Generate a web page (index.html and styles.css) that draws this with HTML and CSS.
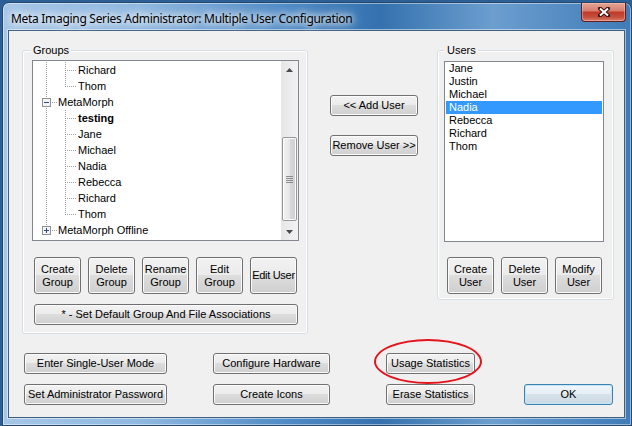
FILE: index.html
```html
<!DOCTYPE html>
<html lang="en">
<head>
    <meta charset="UTF-8">
    <title>Multiple User Configuration</title>
    <link rel="stylesheet" href="styles.css">
</head>
<body>
    <div class="window">
        <div class="titlebar">
            <span class="title">Meta Imaging Series Administrator: Multiple User Configuration</span>
            <span class="close">
                <svg width="12" height="10" viewBox="0 0 12 10">
                    <path d="M2 1.5 L10 8.5 M10 1.5 L2 8.5" stroke="#3b1212" stroke-width="4" stroke-linecap="square"/>
                    <path d="M2 1.5 L10 8.5 M10 1.5 L2 8.5" stroke="#fff" stroke-width="2"/>
                </svg>
            </span>
        </div>
        <div class="client">
            <div class="top">
                <div class="group groups">
                    <span class="legend">Groups</span>
                    <div class="tree">
                        <div class="tree-list">
                            <div class="row child">Richard</div>
                            <div class="row child last">Thom</div>
                            <div class="row root">
                                <svg class="exp" width="9" height="9" viewBox="0 0 9 9">
                                    <rect x="0.5" y="0.5" width="8" height="8" fill="#f4f4f4" stroke="#919191"/>
                                    <path d="M2 4.5 H7" stroke="#2a4d8c"/>
                                </svg>MetaMorph
                            </div>
                            <div class="row child"><b>testing</b></div>
                            <div class="row child">Jane</div>
                            <div class="row child">Michael</div>
                            <div class="row child">Nadia</div>
                            <div class="row child">Rebecca</div>
                            <div class="row child">Richard</div>
                            <div class="row child last">Thom</div>
                            <div class="row root end">
                                <svg class="exp" width="9" height="9" viewBox="0 0 9 9">
                                    <rect x="0.5" y="0.5" width="8" height="8" fill="#f4f4f4" stroke="#919191"/>
                                    <path d="M2 4.5 H7 M4.5 2 V7" stroke="#2a4d8c"/>
                                </svg>MetaMorph Offline
                            </div>
                        </div>
                        <div class="scrollbar">
                            <div class="arrow">
                                <svg width="7" height="4" viewBox="0 0 7 4"><path d="M0 4 L3.5 0 L7 4 Z" fill="#4a4a4a"/></svg>
                            </div>
                            <div class="track">
                                <div class="thumb">
                                    <svg width="7" height="7" viewBox="0 0 7 7"><path d="M0 0.5 H7 M0 2.5 H7 M0 4.5 H7 M0 6.5 H7" stroke="#8a8a8a"/></svg>
                                </div>
                            </div>
                            <div class="arrow">
                                <svg width="7" height="4" viewBox="0 0 7 4"><path d="M0 0 L7 0 L3.5 4 Z" fill="#4a4a4a"/></svg>
                            </div>
                        </div>
                    </div>
                    <div class="btn-row">
                        <button class="btn tall">Create<br>Group</button>
                        <button class="btn tall">Delete<br>Group</button>
                        <button class="btn tall">Rename<br>Group</button>
                        <button class="btn tall">Edit<br>Group</button>
                        <button class="btn tall oneline">Edit User</button>
                    </div>
                    <button class="btn defaults">* - Set Default Group And File Associations</button>
                </div>

                <div class="middle">
                    <button class="btn move">&lt;&lt; Add User</button>
                    <button class="btn move">Remove User &gt;&gt;</button>
                </div>

                <div class="group users">
                    <span class="legend">Users</span>
                    <div class="listbox">
                        <div class="item">Jane</div>
                        <div class="item">Justin</div>
                        <div class="item">Michael</div>
                        <div class="item selected">Nadia</div>
                        <div class="item">Rebecca</div>
                        <div class="item">Richard</div>
                        <div class="item">Thom</div>
                    </div>
                    <div class="btn-row">
                        <button class="btn tall">Create<br>User</button>
                        <button class="btn tall">Delete<br>User</button>
                        <button class="btn tall">Modify<br>User</button>
                    </div>
                </div>
            </div>

            <div class="bottom">
                <div class="col col1">
                    <button class="btn">Enter Single-User Mode</button>
                    <button class="btn">Set Administrator Password</button>
                </div>
                <div class="col col2">
                    <button class="btn">Configure Hardware</button>
                    <button class="btn">Create Icons</button>
                </div>
                <div class="col col3">
                    <div class="marked">
                        <button class="btn">Usage Statistics</button>
                        <span class="ring"></span>
                    </div>
                    <button class="btn">Erase Statistics</button>
                </div>
                <div class="col col4">
                    <button class="btn ok">OK</button>
                </div>
            </div>
        </div>
    </div>
</body>
</html>
```

FILE: styles.css
```css
body {
    margin: 0;
    width: 632px;
    height: 426px;
    overflow: hidden;
    background: #2b5f96;
    font-family: "Liberation Sans", Arial, sans-serif;
    font-size: 11px;
    color: #000;
}
.window {
    box-sizing: border-box;
    width: 630px;
    height: 424px;
    margin: 2px 0 0 2px;
    border: 1px solid #27476b;
    border-radius: 7px 7px 0 0;
    background: linear-gradient(to right, #a6c6e7 0%, #8fb8e0 22%, #4f8bc6 45%, #3471ae 60%, #6c9ecf 78%, #3f7bb8 100%);
    box-shadow: inset 0 0 0 1px rgba(255, 255, 255, 0.45);
}
.titlebar {
    height: 27px;
    display: flex;
    justify-content: space-between;
    align-items: flex-start;
}
.title {
    padding: 7px 0 0 8px;
    font-family: "Noto Sans", "Liberation Sans", sans-serif;
    font-size: 12px;
    letter-spacing: -0.3px;
    color: #000;
    text-shadow: 0 0 6px #fff, 0 0 10px #fff, 0 0 14px #fff;
}
.close {
    width: 45px;
    height: 19px;
    margin-right: 5px;
    box-sizing: border-box;
    border: 1px solid #5e2020;
    border-top: none;
    border-radius: 0 0 4px 4px;
    background: linear-gradient(#e4a696 0%, #d88070 42%, #c03a28 52%, #c4523f 80%, #d8826f 100%);
    box-shadow: inset 0 0 0 1px rgba(255, 200, 190, 0.45);
    display: flex;
    align-items: center;
    justify-content: center;
}
.client {
    box-sizing: border-box;
    width: 617px;
    height: 388px;
    margin-left: 5px;
    background: #f0f0f0;
    border: 1px solid #3d5f82;
    box-shadow: 0 0 0 1px rgba(255, 255, 255, 0.5);
}
.top {
    display: flex;
    align-items: flex-start;
    padding: 19px 0 0 13px;
}
.group {
    position: relative;
    box-sizing: border-box;
    border: 1px solid #d5dfe5;
    border-radius: 3px;
    box-shadow: inset 0 0 0 1px #fff;
}
.legend {
    position: absolute;
    top: -7px;
    padding: 0 2px;
    line-height: 13px;
    background: #f0f0f0;
}
.groups {
    width: 286px;
    padding: 9px 8px 8px 9px;
}
.groups .legend {
    left: 8px;
}
.tree {
    box-sizing: border-box;
    height: 181px;
    border: 1px solid #828790;
    background: #fff;
    display: flex;
}
.tree-list {
    flex: 1;
    padding-top: 1px;
}
.row {
    height: 16px;
    line-height: 16px;
    white-space: nowrap;
    background: repeating-linear-gradient(#a0a0a0 0 1px, transparent 1px 2px) 13px 0 / 1px 16px no-repeat;
}
.row.child {
    padding-left: 45px;
    background:
        repeating-linear-gradient(#a0a0a0 0 1px, transparent 1px 2px) 13px 0 / 1px 16px no-repeat,
        repeating-linear-gradient(#a0a0a0 0 1px, transparent 1px 2px) 32px 0 / 1px 16px no-repeat,
        repeating-linear-gradient(to right, #a0a0a0 0 1px, transparent 1px 2px) 34px 8px / 9px 1px no-repeat;
}
.row.child.last {
    background:
        repeating-linear-gradient(#a0a0a0 0 1px, transparent 1px 2px) 13px 0 / 1px 16px no-repeat,
        repeating-linear-gradient(#a0a0a0 0 1px, transparent 1px 2px) 32px 0 / 1px 9px no-repeat,
        repeating-linear-gradient(to right, #a0a0a0 0 1px, transparent 1px 2px) 34px 8px / 9px 1px no-repeat;
}
.row.root {
    padding-left: 9px;
    display: flex;
    align-items: center;
    background:
        repeating-linear-gradient(#a0a0a0 0 1px, transparent 1px 2px) 13px 0 / 1px 16px no-repeat,
        repeating-linear-gradient(to right, #a0a0a0 0 1px, transparent 1px 2px) 19px 8px / 5px 1px no-repeat;
}
.row.root.end {
    background:
        repeating-linear-gradient(#a0a0a0 0 1px, transparent 1px 2px) 13px 0 / 1px 8px no-repeat,
        repeating-linear-gradient(to right, #a0a0a0 0 1px, transparent 1px 2px) 19px 8px / 5px 1px no-repeat;
}
.exp {
    margin-right: 7px;
    flex: none;
}
.scrollbar {
    width: 17px;
    display: flex;
    flex-direction: column;
    background: linear-gradient(to right, #e6e6e6, #f2f2f2);
}
.arrow {
    height: 17px;
    display: flex;
    align-items: center;
    justify-content: center;
}
.track {
    flex: 1;
    padding-top: 59px;
}
.thumb {
    box-sizing: border-box;
    height: 84px;
    margin: 0 1px;
    border: 1px solid #979797;
    border-radius: 2px;
    background: linear-gradient(to right, #f4f4f4, #e6e6e6 50%, #d8d8d8 51%, #d0d0d0);
    box-shadow: inset 0 0 0 1px #fbfbfb;
    display: flex;
    align-items: center;
    justify-content: center;
}
.btn {
    box-sizing: border-box;
    height: 21px;
    padding: 0;
    font-family: "Liberation Sans", Arial, sans-serif;
    font-size: 11px;
    line-height: 13px;
    color: #000;
    white-space: nowrap;
    border: 1px solid #707070;
    border-radius: 3px;
    background: linear-gradient(#f2f2f2 0%, #ebebeb 48%, #dddddd 50%, #cfcfcf 100%);
    box-shadow: inset 0 0 0 1px #fbfbfb;
}
.btn-row {
    display: flex;
    gap: 7px;
    margin-top: 16px;
    padding-left: 2px;
}
.btn.tall {
    width: 47px;
    height: 37px;
}
.btn.oneline {
    letter-spacing: -0.3px;
}
.defaults {
    display: block;
    width: 264px;
    margin: 10px 0 0 2px;
}
.middle {
    display: flex;
    flex-direction: column;
    gap: 19px;
    width: 88px;
    margin-left: 22px;
    padding-top: 45px;
}
.btn.move {
    width: 88px;
}
.users {
    width: 177px;
    height: 250px;
    margin-left: 19px;
    padding: 10px 0 0 6px;
}
.users .legend {
    left: 7px;
}
.listbox {
    box-sizing: border-box;
    width: 160px;
    height: 181px;
    border: 1px solid #828790;
    background: #fff;
    padding: 0 1px;
}
.item {
    height: 13px;
    line-height: 13px;
    padding-left: 3px;
}
.item.selected {
    background: #3399ff;
    color: #fff;
}
.users .btn-row {
    margin-top: 15px;
    padding-left: 3px;
}
.bottom {
    display: flex;
    padding: 19px 0 0 15px;
}
.col {
    display: flex;
    flex-direction: column;
    justify-content: flex-end;
    gap: 10px;
}
.col1 .btn {
    width: 143px;
}
.col2 {
    margin-left: 46px;
}
.col2 .btn {
    width: 117px;
}
.col3 {
    margin-left: 56px;
}
.col3 .btn {
    width: 89px;
}
.marked {
    position: relative;
}
.marked .btn {
    display: block;
}
.ring {
    position: absolute;
    left: -12px;
    top: -14px;
    width: 108px;
    height: 45px;
    box-sizing: border-box;
    border: 2px solid #e3141c;
    border-radius: 50%;
}
.col4 {
    margin-left: 49px;
}
.btn.ok {
    width: 89px;
    border-color: #3c7fb1;
    box-shadow: inset 0 0 0 1px #c4e6f8;
    background: linear-gradient(#f0f6fa 0%, #e6eef4 48%, #d6e2ea 50%, #cbd9e3 100%);
}
```
